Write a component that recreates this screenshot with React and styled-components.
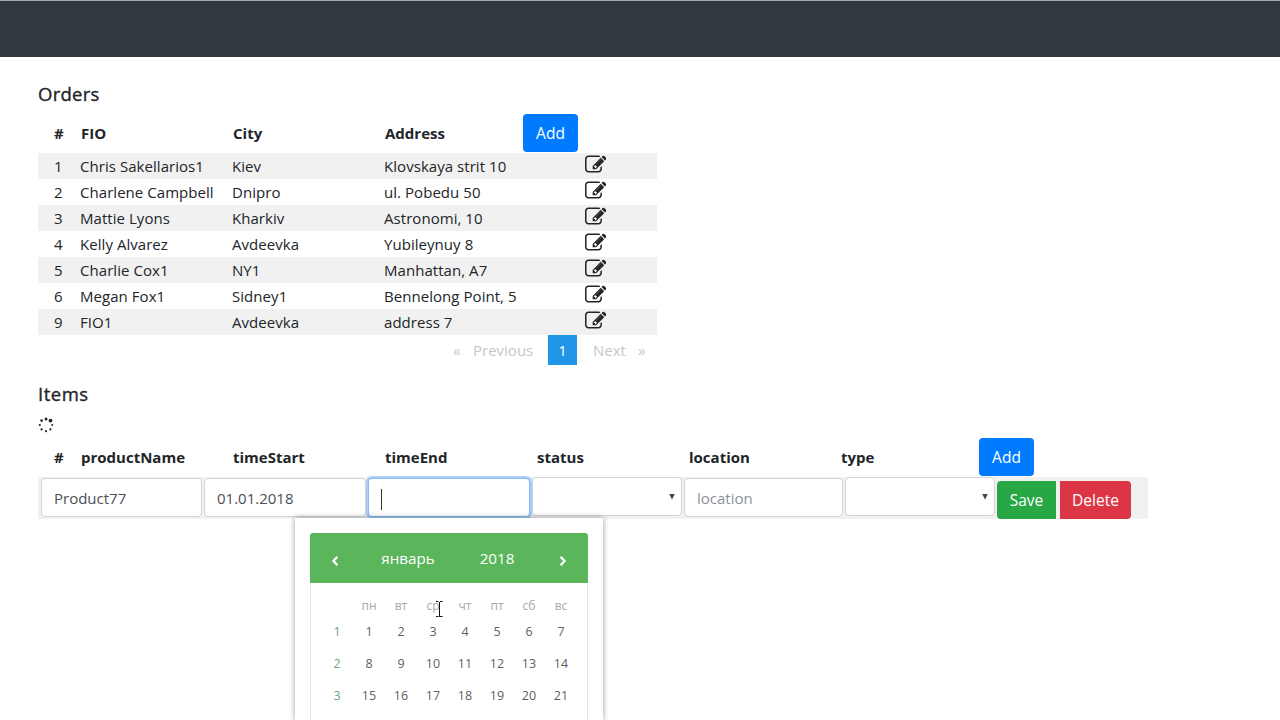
import React from "react";
import styled, { createGlobalStyle, css } from "styled-components";

const GlobalStyle = createGlobalStyle`
  *, *::before, *::after { box-sizing: border-box; }
  body {
    margin: 0;
    background: #fff;
    color: #212529;
    font-family: "Open Sans", "Noto Sans", sans-serif;
    font-size: 15px;
    line-height: 24px;
  }
`;

const Page = styled.div`
  height: 720px;
  overflow: hidden;
`;

const Navbar = styled.header`
  height: 57px;
  background: #32383f;
  border-top: 1px solid #a3abb1;
`;

const Main = styled.main`
  padding: 25px 38px 0;
`;

const Title = styled.h5`
  margin: 0;
  height: 24px;
  font-size: 18.5px;
  font-weight: 500;
  -webkit-text-stroke: 0.35px currentColor;
  letter-spacing: ${(p) => p.$spacing || "0.25px"};
`;

const HeaderRow = styled.div`
  display: flex;
  height: 38px;
  align-items: center;
  font-weight: 700;
`;

const HeaderCell = styled.div`
  width: ${(p) => p.$width || 152}px;
  padding-left: ${(p) => p.$pad ?? 1}px;
  letter-spacing: ${(p) => p.$spacing || "0"};
  white-space: nowrap;
`;

const buttonColors = { primary: "#007bff", success: "#28a745", danger: "#dc3545" };

const Button = styled.button`
  width: ${(p) => p.$width}px;
  height: 38px;
  padding: 0;
  border: 0;
  border-radius: ${(p) => p.$radius || "4px"};
  background: ${(p) => buttonColors[p.$kind]};
  color: #fff;
  font: 400 15.5px/38px "Open Sans", sans-serif;
`;

const Orders = styled.section`
  width: 619px;
  padding-top: 8px;
`;

const OrdersBody = styled.div`
  margin-top: 1px;
`;

const OrderRow = styled.div`
  display: flex;
  height: 26px;
  line-height: 27px;
  letter-spacing: 0.05px;
  white-space: nowrap;
  &:nth-child(odd) { background: #f1f1f1; }
`;

const Cell = styled.div`
  width: ${(p) => p.$width || 152}px;
  padding-left: ${(p) => p.$pad || 0}px;
`;

const IconCell = styled.div`
  flex: 1;
  display: flex;
  justify-content: center;
  padding: 1px 2px 0 0;
  svg { display: block; width: 21.5px; height: 21.5px; }
`;

const Pager = styled.nav`
  display: flex;
  height: 30px;
  line-height: 31px;
  color: #c4c7c9;
  padding-left: 415px;
`;

const PagerItem = styled.span`
  width: ${(p) => p.$width}px;
  white-space: nowrap;
  ${(p) => p.$active && css`
    margin-right: 16px;
    background: #2196e8;
    color: #fff;
    text-align: center;
  `}
`;

const ItemsSection = styled.section`
  padding-top: 17px;
`;

const SpinnerRow = styled.div`
  height: 32px;
  padding-top: 11px;
  svg { display: block; }
`;

const ItemsBody = styled.div`
  display: flex;
  width: 1110px;
  height: 42px;
  margin-top: 1px;
  padding: 0 0 0 3px;
  background: #f1f1f1;
`;

const fieldStyle = css`
  width: ${(p) => p.$width}px;
  height: 39px;
  margin: ${(p) => p.$top ?? 1}px 2px 0 0;
  border: 1px solid #ced4da;
  border-radius: 4px;
  background: #fff;
`;

const Field = styled.div`
  ${fieldStyle}
  padding-left: 12px;
  line-height: 38px;
  color: ${(p) => (p.$placeholder ? "#8b9299" : "#495057")};
  ${(p) => p.$focused && css`
    border-color: #80bdff;
    box-shadow: 0 0 0 2px rgba(128, 180, 235, 0.6);
    z-index: 1;
    display: flex;
    align-items: center;
    position: relative;
  `}
`;

const Caret = styled.i`
  width: 1px;
  height: 21px;
  margin-top: 3px;
  background: #333;
`;

const Select = styled.div`
  ${fieldStyle}
  display: flex;
  justify-content: flex-end;
  align-items: center;
  padding-right: 6px;
`;

const Arrow = styled.span`
  width: 6px;
  height: 6px;
  background: #444;
  clip-path: polygon(0 0, 100% 0, 50% 100%);
`;

const Actions = styled.div`
  display: flex;
  gap: 4px;
  padding-top: 4px;
`;

const Popup = styled.div`
  position: absolute;
  left: 295px;
  top: 518px;
  width: 308px;
  height: 202px;
  padding: 15px 15px 0 15px;
  background: #fff;
  box-shadow: 0 0 6px rgba(0, 0, 0, 0.4);
  clip-path: inset(-6px -8px 0 -8px);
  z-index: 2;
`;

const CalendarHeader = styled.div`
  display: flex;
  align-items: center;
  height: 50px;
  border-radius: 3px 3px 0 0;
  background: #5ab55b;
  color: #fff;
  font-size: 15.2px;
  line-height: 50px;
  svg { display: block; flex: none; margin-top: 5px; }
`;

const CalendarLabel = styled.span`
  width: ${(p) => p.$width}px;
  text-align: center;
`;

const CalendarBody = styled.div`
  height: 137px;
  padding: 10px 10px 0;
  border: solid #e6e6e6;
  border-width: 0 1px;
`;

const Week = styled.div`
  display: grid;
  grid-template-columns: repeat(8, 32px);
  height: ${(p) => (p.$head ? 23 : 32)}px;
  line-height: ${(p) => (p.$head ? 26 : 32)}px;
  font-size: ${(p) => (p.$head ? 12 : 12.5)}px;
  color: ${(p) => (p.$head ? "#a6a8aa" : "#5d6165")};
  text-align: center;
`;

const WeekNumber = styled.span`
  color: #6fa96f;
`;

const Pointer = styled.svg`
  position: absolute;
  left: 435px;
  top: 601px;
  z-index: 3;
`;

function EditIcon() {
  return (
    <svg viewBox="0 0 1792 1792" fill="#212529">
      <path d="M888 1184l116-116-152-152-116 116v56h96v96h56zm440-720q-16-16-33 1l-350 350q-17 17-1 33t33-1l350-350q17-17 1-33zm80 594v190q0 119-84.5 203.5t-203.5 84.5h-832q-119 0-203.5-84.5t-84.5-203.5v-832q0-119 84.5-203.5t203.5-84.5h832q63 0 117 25 15 7 18 23 3 17-9 29l-49 49q-14 14-32 8-23-6-45-6h-832q-66 0-113 47t-47 113v832q0 66 47 113t113 47h832q66 0 113-47t47-113v-126q0-13 9-22l64-64q15-15 35-7t20 29zm-96-738l288 288-672 672h-288v-288zm444 132l-92 92-288-288 92-92q28-28 68-28t68 28l152 152q28 28 28 68t-28 68z" />
      <path d="M1328 464L945 847" stroke="#212529" strokeWidth="90" />
    </svg>
  );
}

function Spinner() {
  const dots = [
    [8, 1.9, 1.5], [12.5, 3.6, 1.9], [14.2, 8, 1.0], [12.4, 12.4, 1.1],
    [8, 14.2, 1.1], [3.6, 12.4, 1.1], [1.8, 8, 1.1], [3.6, 3.6, 1.3],
  ];
  return (
    <svg width="16" height="16" viewBox="0 0 16 16" fill="#212529">
      {dots.map(([x, y, r]) => <circle key={`${x}-${y}`} cx={x} cy={y} r={r} />)}
    </svg>
  );
}

function Chevron({ right }) {
  return (
    <svg width="8" height="10" viewBox="0 0 8 10" fill="none" stroke="#fff" strokeWidth="2.3">
      <path d={right ? "M1.6 0.8L5.6 5L1.6 9.2" : "M6.4 0.8L2.4 5L6.4 9.2"} />
    </svg>
  );
}

const orders = [
  [1, "Chris Sakellarios1", "Kiev", "Klovskaya strit 10"],
  [2, "Charlene Campbell", "Dnipro", "ul. Pobedu 50"],
  [3, "Mattie Lyons", "Kharkiv", "Astronomi, 10"],
  [4, "Kelly Alvarez", "Avdeevka", "Yubileynuy 8"],
  [5, "Charlie Cox1", "NY1", "Manhattan, A7"],
  [6, "Megan Fox1", "Sidney1", "Bennelong Point, 5"],
  [9, "FIO1", "Avdeevka", "address 7"],
];

const weekDays = ["", "пн", "вт", "ср", "чт", "пт", "сб", "вс"];

export default function App() {
  return (
    <Page>
      <GlobalStyle />
      <Navbar />
      <Main>
        <Title>Orders</Title>
        <Orders>
          <HeaderRow>
            <HeaderCell $width={42} $pad={16}>#</HeaderCell>
            <HeaderCell>FIO</HeaderCell>
            <HeaderCell>City</HeaderCell>
            <HeaderCell $width={139}>Address</HeaderCell>
            <Button $kind="primary" $width={55}>Add</Button>
          </HeaderRow>
          <OrdersBody>
            {orders.map(([id, fio, city, address]) => (
              <OrderRow key={id}>
                <Cell $width={42} $pad={16}>{id}</Cell>
                <Cell>{fio}</Cell>
                <Cell>{city}</Cell>
                <Cell>{address}</Cell>
                <IconCell><EditIcon /></IconCell>
              </OrderRow>
            ))}
          </OrdersBody>
          <Pager>
            <PagerItem $width={20}>«</PagerItem>
            <PagerItem $width={75}>Previous</PagerItem>
            <PagerItem $width={29} $active>1</PagerItem>
            <PagerItem $width={45}>Next</PagerItem>
            <PagerItem $width={10}>»</PagerItem>
          </Pager>
        </Orders>
        <ItemsSection>
          <Title $spacing="0.5px">Items</Title>
          <SpinnerRow><Spinner /></SpinnerRow>
          <HeaderRow>
            <HeaderCell $width={42} $pad={16}>#</HeaderCell>
            <HeaderCell>productName</HeaderCell>
            <HeaderCell>timeStart</HeaderCell>
            <HeaderCell>timeEnd</HeaderCell>
            <HeaderCell>status</HeaderCell>
            <HeaderCell>location</HeaderCell>
            <HeaderCell $width={139}>type</HeaderCell>
            <Button $kind="primary" $width={55}>Add</Button>
          </HeaderRow>
          <ItemsBody>
            <Field $width={161}>Product77</Field>
            <Field $width={162}>01.01.2018</Field>
            <Field $width={162} $focused><Caret /></Field>
            <Select $width={150} $top={0}><Arrow /></Select>
            <Field $width={159} $placeholder>location</Field>
            <Select $width={150} $top={0}><Arrow /></Select>
            <Actions>
              <Button $kind="success" $width={59} $radius="4px 0 0 4px">Save</Button>
              <Button $kind="danger" $width={71} $radius="0 4px 4px 0">Delete</Button>
            </Actions>
          </ItemsBody>
        </ItemsSection>
      </Main>
      <Popup>
        <CalendarHeader>
          <CalendarLabel $width={21} />
          <Chevron />
          <CalendarLabel $width={138}>январь</CalendarLabel>
          <CalendarLabel $width={40}>2018</CalendarLabel>
          <CalendarLabel $width={42} />
          <Chevron right />
        </CalendarHeader>
        <CalendarBody>
          <Week $head>
            {weekDays.map((d) => <span key={d}>{d}</span>)}
          </Week>
          {[1, 2, 3].map((week) => (
            <Week key={week}>
              <WeekNumber>{week}</WeekNumber>
              {[1, 2, 3, 4, 5, 6, 7].map((d) => <span key={d}>{(week - 1) * 7 + d}</span>)}
            </Week>
          ))}
        </CalendarBody>
      </Popup>
      <Pointer width="8" height="17" viewBox="0 0 8 17" fill="none" stroke="#111">
        <path d="M1 0.5H3.5M5 0.5H7.5M4.5 1V16M1 15.5H3.5M5 15.5H7.5" />
      </Pointer>
    </Page>
  );
}
